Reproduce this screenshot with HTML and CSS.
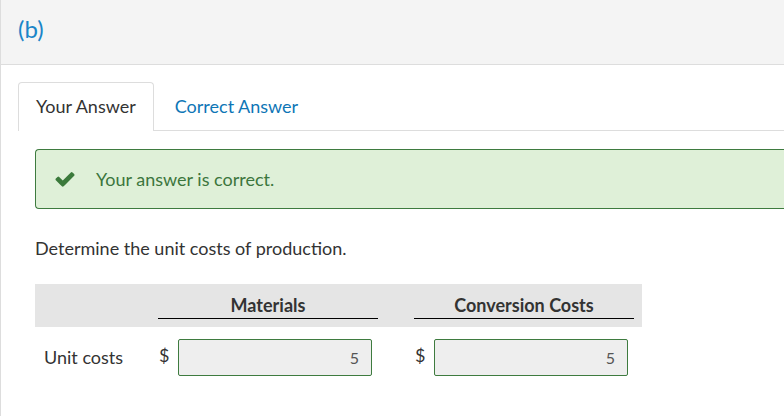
FILE: index.html
```html
<!DOCTYPE html>
<html lang="en">
<head>
  <meta charset="UTF-8">
  <title>Part (b)</title>
  <link rel="stylesheet" href="styles.css">
</head>
<body>

  <div class="part">
    <div class="part-head">(b)</div>

    <div class="tabs">
      <div class="tab active">Your Answer</div>
      <div class="tab">Correct Answer</div>
    </div>

    <div class="content">
      <div class="alert">
        <svg class="check" viewBox="0 0 1792 1792" width="22" height="22">
          <path fill="#3b7a3b" d="M1671 566q0 40-28 68l-724 724-136 136q-28 28-68 28t-68-28l-136-136-362-362q-28-28-28-68t28-68l136-136q28-28 68-28t68 28l294 295 656-657q28-28 68-28t68 28l136 136q28 28 28 68z"/>
        </svg>
        <span>Your answer is correct.</span>
      </div>

      <p class="question">Determine the unit costs of production.</p>

      <div class="costs">
        <div class="th blank"></div>
        <div class="th"><span>Materials</span></div>
        <div class="th blank"></div>
        <div class="th"><span>Conversion Costs</span></div>
        <div class="th blank"></div>

        <div class="label">Unit costs</div>
        <div class="cell"><span class="dollar">$</span><div class="field">5</div></div>
        <div></div>
        <div class="cell"><span class="dollar">$</span><div class="field">5</div></div>
        <div></div>
      </div>
    </div>
  </div>

</body>
</html>
```

FILE: styles.css
```css
html, body {
  margin: 0;
  height: 100%;
  overflow: hidden;
  background: #fff;
}

body {
  font-family: Lato, "Open Sans", sans-serif;
  color: #333;
}

.part {
  border-left: 1px solid #ddd;
  height: 100%;
}

.part-head {
  background: #f4f4f4;
  border-bottom: 1px solid #ddd;
  height: 65px;
  box-sizing: border-box;
  padding: 13px 0 0 17px;
  font-size: 24px;
  line-height: 32px;
  color: #1a85c8;
}

.tabs {
  display: flex;
  margin: 17px 0 0 17px;
  border-bottom: 1px solid #ddd;
}

.tab {
  height: 48px;
  box-sizing: border-box;
  padding: 0 20px;
  font-size: 18px;
  line-height: 47px;
  color: #0e76b6;
  border: 1px solid transparent;
  border-bottom: 0;
  margin-bottom: -1px;
}

.tab.active {
  padding: 0 17px;
  color: #333;
  background: #fff;
  border-color: #ddd;
  border-radius: 4px 4px 0 0;
  height: 49px;
}

.content {
  padding-left: 34px;
}

.alert {
  margin-top: 18px;
  height: 60px;
  box-sizing: border-box;
  display: flex;
  align-items: center;
  background: #dff0d8;
  border: 1px solid #3e7b3f;
  border-right: 0;
  border-radius: 4px 0 0 4px;
  color: #3c763d;
  font-size: 18px;
  padding-left: 18px;
}

.check {
  margin-right: 20px;
}

.question {
  margin: 27px 0 0;
  font-size: 18px;
  line-height: 24px;
}

.costs {
  display: grid;
  grid-template-columns: 123px 220px 36px 220px 8px;
  width: 607px;
  margin-top: 24px;
}

.th {
  background: #e5e5e5;
  height: 43px;
  box-sizing: border-box;
  padding-bottom: 8px;
  display: flex;
  align-items: flex-end;
}

.th span {
  flex: 1;
  text-align: center;
  font-weight: bold;
  font-size: 18px;
  line-height: 24px;
  border-bottom: 1px solid #000;
  padding-bottom: 1px;
}

.label {
  padding: 12px 0 0 9px;
  height: 37px;
  line-height: 37px;
  font-size: 18px;
}

.cell {
  display: flex;
  padding-top: 12px;
}

.dollar {
  width: 19px;
  font-size: 18px;
  line-height: 32px;
  padding-left: 1px;
}

.field {
  width: 194px;
  height: 37px;
  box-sizing: border-box;
  background: #eee;
  border: 1px solid #3e7b3f;
  border-radius: 2px;
  text-align: right;
  padding-right: 12px;
  font-size: 16px;
  line-height: 35px;
  color: #555;
}
```
